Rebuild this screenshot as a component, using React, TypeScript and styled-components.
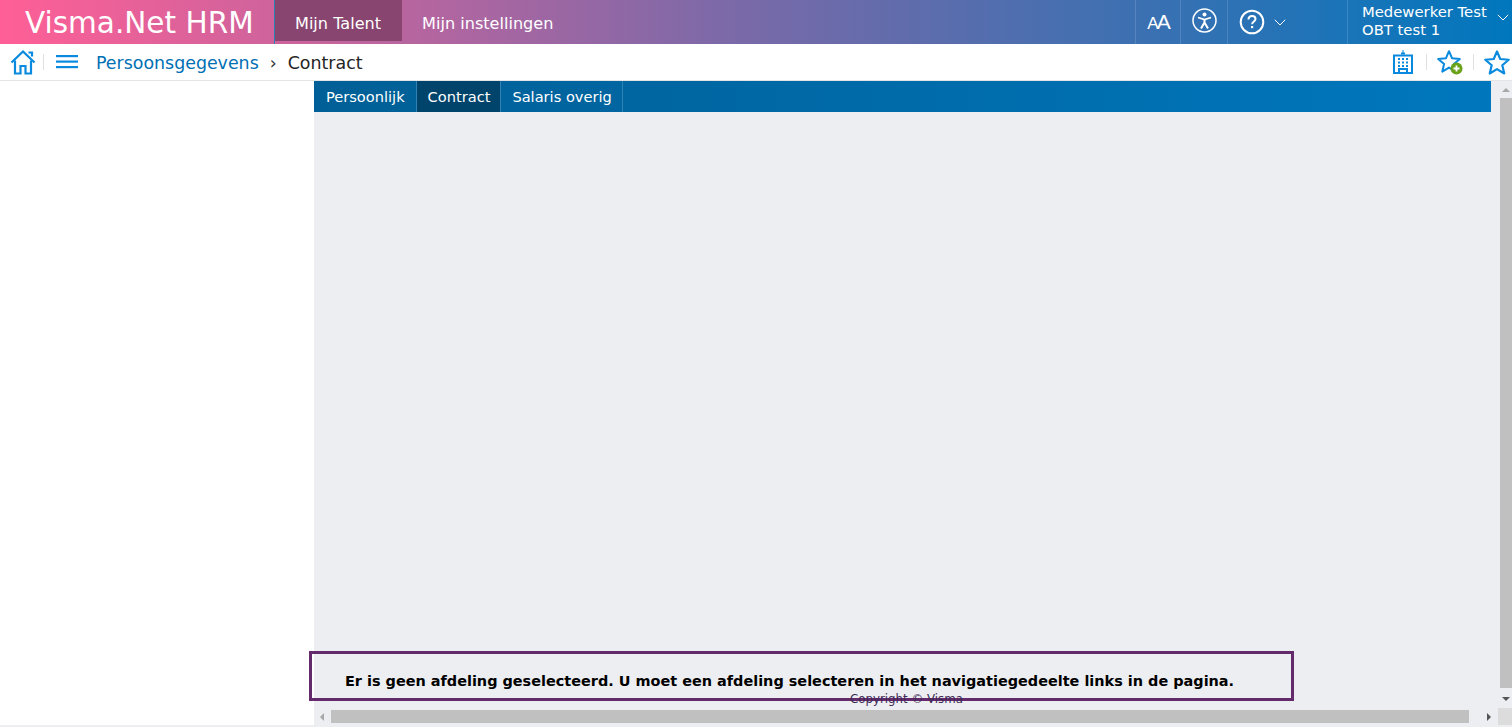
import styled, { createGlobalStyle } from 'styled-components';

const GlobalStyle = createGlobalStyle`
  html, body {
    margin: 0;
    padding: 0;
    height: 100%;
    overflow: hidden;
    background: #fff;
  }
  * {
    box-sizing: border-box;
  }
  body {
    font-family: "DejaVu Sans", Verdana, sans-serif;
  }
`;

const HomeIcon = () => (
  <svg width="26" height="26" viewBox="0 0 26 26" fill="none" stroke="#0a8ade" strokeWidth="2.2">
    <path d="M1.5 13.5 13 2.500l11.500 11" />
    <path d="M18.500 3.500h3.500v4" />
    <path d="M5 11.500V24.500h5.500v-7.500h5v7.500H21V11.500" />
  </svg>
);

const StarOutline = () => (
  <path
    d="M12 2.200l3 7 7.800.7-5.900 5.100 1.800 7.600L12 18.600l-6.700 4 1.800-7.600L1.200 9.900 9 9.200z"
    fill="#fff"
    stroke="#0a8ade"
    strokeWidth="2"
    strokeLinejoin="round"
  />
);

const BuildingIcon = () => (
  <svg width="20" height="24" viewBox="0 0 20 24" fill="none">
    <path d="M1 5.500h18V23H1z" stroke="#0a8ade" strokeWidth="2" />
    <path d="M8 4.500V2.500h1.500V0h1v2.500H12v2z" fill="#0a8ade" />
    <path d="M5 8h2v2H5zM9 8h2v2H9zM13 8h2v2h-2zM5 11.500h2v2H5zM9 11.500h2v2H9zM13 11.500h2v2h-2zM5 15h2v2H5zM9 15h2v2H9zM13 15h2v2h-2z" fill="#0a8ade" />
    <path d="M6 23v-4h8v4" stroke="#0a8ade" strokeWidth="2" />
  </svg>
);

const StarAddIcon = () => (
  <svg width="26" height="26" viewBox="0 0 26 26">
    <StarOutline />
    <circle cx="19.500" cy="19.500" r="6" fill="#6aa319" />
    <path d="M19.500 16.500v6M16.500 19.500h6" stroke="#fff" strokeWidth="1.800" />
  </svg>
);

const StarIcon = () => (
  <svg width="26" height="26" viewBox="0 0 24 24">
    <StarOutline />
  </svg>
);

const MenuIcon = () => (
  <svg width="22" height="14" viewBox="0 0 22 14" fill="#0a8ade">
    <rect y="0" width="22" height="2.200" />
    <rect y="5.500" width="22" height="2.200" />
    <rect y="11" width="22" height="2.200" />
  </svg>
);

const AccessIcon = () => (
  <svg width="25" height="25" viewBox="0 0 25 25" fill="none" stroke="#fff">
    <circle cx="12.500" cy="12.500" r="11.500" strokeWidth="1.500" />
    <circle cx="12.500" cy="6.500" r="2" fill="#fff" stroke="none" />
    <path d="M6 9.500l6.500 2 6.500-2" strokeWidth="1.800" />
    <path d="M12.500 11v4.500M12.500 14.500 9 20.500M12.500 14.500l3.500 6" strokeWidth="2" />
  </svg>
);

const HelpIcon = () => (
  <svg width="26" height="26" viewBox="0 0 26 26">
    <circle cx="13" cy="13" r="11.300" fill="none" stroke="#fff" strokeWidth="2" />
    <path d="M9.500 10.500c0-2.300 1.600-3.500 3.600-3.500s3.400 1.200 3.400 3c0 2.500-3.400 2.600-3.400 5.300" fill="none" stroke="#fff" strokeWidth="2" />
    <rect x="12" y="17" width="2.200" height="2.200" fill="#fff" />
  </svg>
);

const Chevron = () => (
  <svg width="12" height="7" viewBox="0 0 12 7" fill="none" stroke="#fff" strokeWidth="1">
    <path d="M.8.8 6 6l5.200-5.200" />
  </svg>
);

export default function App() {
  return (
    <>
      <GlobalStyle />
      <Page>
        <TopBar>
          <Brand>Visma.Net HRM</Brand>
          <TopLink active>Mijn Talent</TopLink>
          <TopLink>Mijn instellingen</TopLink>
          <TopTools>
            <ToolCell width={45}>
              <FontSizeGlyph>
                <small>A</small>A
              </FontSizeGlyph>
            </ToolCell>
            <AccessCell width={47}>
              <AccessIcon />
            </AccessCell>
            <ToolCell width={120} left>
              <HelpIcon />
              <Chevron />
            </ToolCell>
            <UserCell>
              <UserNames>
                <span>Medewerker Test</span>
                <span>OBT test 1</span>
              </UserNames>
              <Chevron />
            </UserCell>
          </TopTools>
        </TopBar>

        <SubBar>
          <SubIcon>
            <HomeIcon />
          </SubIcon>
          <SubDivider />
          <MenuSlot>
            <MenuIcon />
          </MenuSlot>
          <Crumbs>
            <CrumbLink>Persoonsgegevens</CrumbLink>
            <CrumbSep>›</CrumbSep>
            <CrumbCurrent>Contract</CrumbCurrent>
          </Crumbs>
          <SubActions>
            <BuildingSlot>
              <BuildingIcon />
            </BuildingSlot>
            <SubDivider />
            <StarAddIcon />
            <SubDivider />
            <StarIcon />
          </SubActions>
        </SubBar>

        <Main>
          <SidePanel />
          <Workspace>
            <Content>
              <Tabs>
                <Tab>Persoonlijk</Tab>
                <Tab active>Contract</Tab>
                <Tab>Salaris overig</Tab>
              </Tabs>
              <Body>
                <Notice>
                  Er is geen afdeling geselecteerd. U moet een afdeling selecteren in het navigatiegedeelte links in de pagina.
                  <Copyright>Copyright © Visma</Copyright>
                </Notice>
              </Body>
            </Content>
            <VScroll>
              <ArrowUp />
              <VThumb />
              <ArrowDown />
            </VScroll>
            <HScroll>
              <ArrowLeft />
              <HThumb />
              <ArrowRight />
            </HScroll>
            <ScrollCorner />
          </Workspace>
        </Main>
        <BottomStrip />
      </Page>
    </>
  );
}

const Page = styled.div`
  display: flex;
  flex-direction: column;
  width: 1512px;
  height: 727px;
  overflow: hidden;
`;

const TopBar = styled.div`
  display: flex;
  align-items: stretch;
  height: 44px;
  flex: none;
  color: #fff;
  background: linear-gradient(90deg, #ff5f96 0%, #b7659f 27%, #7c69a8 48%, #3f70b1 74%, #0077bd 100%);
`;

const Brand = styled.div`
  width: 275px;
  padding-left: 25px;
  font-size: 29.5px;
  line-height: 47px;
  white-space: nowrap;
  border-right: 1px solid #2f7fb8;
`;

const TopLink = styled.div<{ active?: boolean }>`
  display: flex;
  align-items: center;
  justify-content: flex-start;
  height: 41px;
  padding: 6px ${props => (props.active ? '21px' : '20px')} 0 20px;
  font-size: 16.1px;
  white-space: nowrap;
  background: ${props => (props.active ? '#87456f' : 'transparent')};
`;

const TopTools = styled.div`
  display: flex;
  margin-left: auto;
`;

const ToolCell = styled.div<{ width: number; left?: boolean }>`
  display: flex;
  align-items: center;
  justify-content: ${props => (props.left ? 'flex-start' : 'center')};
  gap: 9px;
  width: ${props => props.width}px;
  padding-left: ${props => (props.left ? '11px' : '0')};
  border-left: 1px solid rgba(255, 255, 255, 0.14);
`;

const AccessCell = styled(ToolCell)`
  padding-bottom: 3px;
`;

const FontSizeGlyph = styled.span`
  font-family: "Liberation Sans", Arial, sans-serif;
  font-size: 21px;
  line-height: 1;
  letter-spacing: -2px;
  padding-bottom: 1px;

  small {
    font-size: 17px;
  }
`;

const UserCell = styled.div`
  display: flex;
  align-items: flex-start;
  width: 165px;
  padding: 3px 0 0 14px;
  border-left: 1px solid rgba(255, 255, 255, 0.14);

  svg {
    margin: 11px 0 0 10px;
    flex: none;
  }
`;

const UserNames = styled.div`
  display: flex;
  flex-direction: column;
  font-size: 14.8px;
  line-height: 18px;
  white-space: nowrap;
`;

const SubBar = styled.div`
  display: flex;
  align-items: center;
  flex: none;
  height: 37px;
  background: #fff;
  border-bottom: 1px solid #e4e4e6;
`;

const SubIcon = styled.div`
  display: flex;
  width: 43px;
  padding-left: 10px;
`;

const SubDivider = styled.div`
  width: 1px;
  height: 16px;
  background: #e0e0e0;
`;

const MenuSlot = styled.div`
  display: flex;
  width: 52px;
  padding-left: 12px;
`;

const Crumbs = styled.div`
  display: flex;
  align-items: center;
  padding-top: 1px;
  font-size: 17.4px;
`;

const CrumbLink = styled.span`
  color: #0070b4;
`;

const CrumbSep = styled.span`
  width: 29px;
  text-align: center;
  color: #333;
`;

const CrumbCurrent = styled.span`
  color: #252525;
`;

const SubActions = styled.div`
  display: flex;
  align-items: center;
  gap: 10px;
  margin-left: auto;
  margin-right: 2px;
`;

const BuildingSlot = styled.div`
  display: flex;
  margin-right: 3px;
`;

const Main = styled.div`
  display: flex;
  flex: 1;
  min-height: 0;
`;

const SidePanel = styled.div`
  width: 314px;
  flex: none;
  background: #fff;
`;

const Workspace = styled.div`
  display: grid;
  grid-template-columns: 1fr 21px;
  grid-template-rows: 1fr 17px;
  flex: 1;
  min-width: 0;
  background: #edeef2;
`;

const BottomStrip = styled.div`
  flex: none;
  height: 2px;
  background: #edeef2;
`;

const Content = styled.div`
  display: flex;
  flex-direction: column;
  min-height: 0;
`;

const Tabs = styled.div`
  display: flex;
  flex: none;
  height: 31px;
  background: linear-gradient(90deg, #005f96 0%, #0077bd 100%);
`;

const Tab = styled.div<{ active?: boolean }>`
  display: flex;
  align-items: center;
  padding: 0 10px 0 11px;
  font-size: 14.6px;
  color: #fff;
  white-space: nowrap;
  background: ${props => (props.active ? '#00446b' : 'transparent')};
  border-right: 1px solid #2f82b3;

  &:first-child {
    padding: 0 11px 0 12px;
  }
`;

const Body = styled.div`
  display: flex;
  flex: 1;
  align-items: flex-end;
  padding-bottom: 7px;
`;

const Notice = styled.div`
  position: relative;
  width: 985px;
  height: 50px;
  margin-left: -5px;
  padding: 19px 0 0 33px;
  border: 3px solid #642a6c;
  font-size: 14.44px;
  font-weight: 700;
  color: #000;
  white-space: nowrap;
`;

const Copyright = styled.span`
  position: absolute;
  left: 538px;
  top: 38px;
  font-size: 11.8px;
  font-weight: 400;
  color: #3d2a55;
`;

const VScroll = styled.div`
  display: flex;
  flex-direction: column;
  align-items: center;
  padding: 7px 0 0 9px;
`;

const VThumb = styled.div`
  flex: 1;
  width: 100%;
  margin: 6px 0 9px;
  background: #c0c0c0;
`;

const ArrowUp = styled.div`
  border: 4px solid transparent;
  border-top: 0;
  border-bottom: 4px solid #a8a8a8;
`;

const ArrowDown = styled.div`
  margin-bottom: 7px;
  border: 4px solid transparent;
  border-bottom: 0;
  border-top: 4px solid #555;
`;

const HScroll = styled.div`
  display: flex;
  align-items: center;
  padding-left: 6px;
`;

const HThumb = styled.div`
  flex: 1;
  height: 13px;
  margin: 0 18px 0 7px;
  background: #c0c0c0;
`;

const ArrowLeft = styled.div`
  border: 4px solid transparent;
  border-left: 0;
  border-right: 4px solid #a8a8a8;
`;

const ArrowRight = styled.div`
  border: 4px solid transparent;
  border-right: 0;
  border-left: 4px solid #555;
`;

const ScrollCorner = styled.div`
  margin-left: 7px;
  background: #dcdcdc;
`;
